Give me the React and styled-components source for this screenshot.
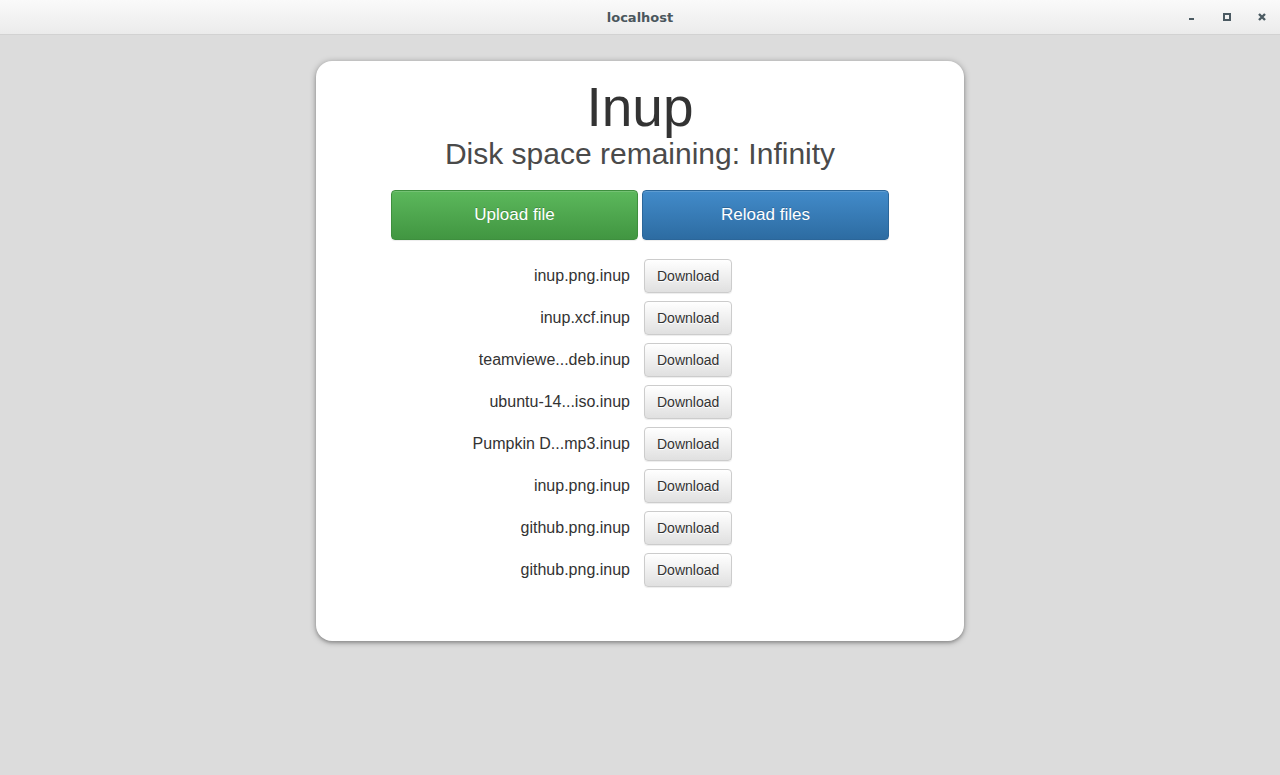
import React from "react";
import styled, { createGlobalStyle } from "styled-components";

const Global = createGlobalStyle`
  html, body { margin: 0; padding: 0; }
  body {
    background: #dcdcdc;
    font-family: "Liberation Sans", Arial, sans-serif;
    color: #333;
    min-height: 775px;
  }
`;

const TitleBar = styled.div`
  height: 35px;
  box-sizing: border-box;
  background: linear-gradient(to bottom, #fafafa 0%, #ebebeb 100%);
  border-bottom: 1px solid #d2d2d2;
  display: flex;
  align-items: center;
  justify-content: center;
  position: relative;
`;

const TitleText = styled.div`
  font-family: "DejaVu Sans", sans-serif;
  font-weight: bold;
  font-size: 13px;
  color: #4b575d;
  margin-top: 1px;
`;

const Controls = styled.div`
  position: absolute;
  right: 1px;
  top: 0;
  height: 34px;
  display: flex;
  align-items: center;
`;

const Ctl = styled.div`
  width: 35px;
  height: 34px;
  display: flex;
  align-items: center;
  justify-content: center;
`;

const Page = styled.div`
  display: flex;
  justify-content: center;
  padding-top: 26px;
`;

const Card = styled.div`
  width: 648px;
  box-sizing: border-box;
  background: #fff;
  border-radius: 16px;
  box-shadow: 0 1px 6px rgba(0, 0, 0, 0.35), 0 2px 3px rgba(0, 0, 0, 0.15);
  padding: 16px 0 54px;
  display: flex;
  flex-direction: column;
  align-items: center;
`;

const Heading = styled.h1`
  margin: 0;
  font-weight: 400;
  font-size: 55px;
  line-height: 1.1;
  color: #333;
`;

const Sub = styled.h2`
  margin: -1px 0 0;
  font-weight: 400;
  font-size: 30px;
  line-height: 1.1;
  color: #4a4a4a;
`;

const Actions = styled.div`
  display: flex;
  gap: 4px;
  margin-top: 20px;
`;

const BigButton = styled.button`
  width: 247px;
  box-sizing: border-box;
  font-family: "Liberation Sans", Arial, sans-serif;
  font-size: 17px;
  line-height: 24px;
  padding: 12px 16px;
  border-radius: 4px;
  color: #fff;
  border: 1px solid ${(p) => p.$border};
  background: linear-gradient(to bottom, ${(p) => p.$from} 0%, ${(p) => p.$to} 100%);
  text-shadow: 0 -1px 0 rgba(0, 0, 0, 0.2);
  box-shadow: inset 0 1px 0 rgba(255, 255, 255, 0.15), 0 1px 1px rgba(0, 0, 0, 0.075);
  cursor: pointer;
`;

const FileList = styled.div`
  margin-top: 19px;
  width: 100%;
  display: flex;
  flex-direction: column;
  gap: 8px;
`;

const Row = styled.div`
  display: grid;
  grid-template-columns: 1fr 1fr;
  align-items: center;
`;

const FileName = styled.span`
  text-align: right;
  font-size: 16px;
  color: #333;
  padding-right: 14px;
  margin-right: -4px;
`;

const DlButton = styled.button`
  justify-self: start;
  margin-left: 4px;
  font-family: "Liberation Sans", Arial, sans-serif;
  font-size: 14px;
  line-height: 20px;
  padding: 6px 12px;
  border-radius: 4px;
  color: #333;
  border: 1px solid #ccc;
  background: linear-gradient(to bottom, #fff 0%, #e0e0e0 100%);
  text-shadow: 0 1px 0 #fff;
  box-shadow: inset 0 1px 0 rgba(255, 255, 255, 0.15), 0 1px 1px rgba(0, 0, 0, 0.075);
  cursor: pointer;
`;

const files = [
  "inup.png.inup",
  "inup.xcf.inup",
  "teamviewe...deb.inup",
  "ubuntu-14...iso.inup",
  "Pumpkin D...mp3.inup",
  "inup.png.inup",
  "github.png.inup",
  "github.png.inup",
];

const ic = "#4b5a62";

export default function App() {
  return (
    <>
      <Global />
      <TitleBar>
        <TitleText>localhost</TitleText>
        <Controls>
          <Ctl>
            <svg width="8" height="8" viewBox="0 0 8 8">
              <rect x="1" y="5" width="5" height="2" fill={ic} />
            </svg>
          </Ctl>
          <Ctl>
            <svg width="8" height="8" viewBox="0 0 8 8">
              <rect x="1" y="1" width="6" height="6" fill="none" stroke={ic} strokeWidth="2" />
            </svg>
          </Ctl>
          <Ctl>
            <svg width="8" height="8" viewBox="0 0 8 8">
              <path d="M1 1 L7 7 M7 1 L1 7" stroke={ic} strokeWidth="2.4" />
            </svg>
          </Ctl>
        </Controls>
      </TitleBar>
      <Page>
        <Card>
          <Heading>Inup</Heading>
          <Sub>Disk space remaining: Infinity</Sub>
          <Actions>
            <BigButton $from="#5cb85c" $to="#419641" $border="#3e8f3e">Upload file</BigButton>
            <BigButton $from="#428bca" $to="#2d6ca2" $border="#2b669a">Reload files</BigButton>
          </Actions>
          <FileList>
            {files.map((f, i) => (
              <Row key={i}>
                <FileName>{f}</FileName>
                <DlButton>Download</DlButton>
              </Row>
            ))}
          </FileList>
        </Card>
      </Page>
    </>
  );
}
